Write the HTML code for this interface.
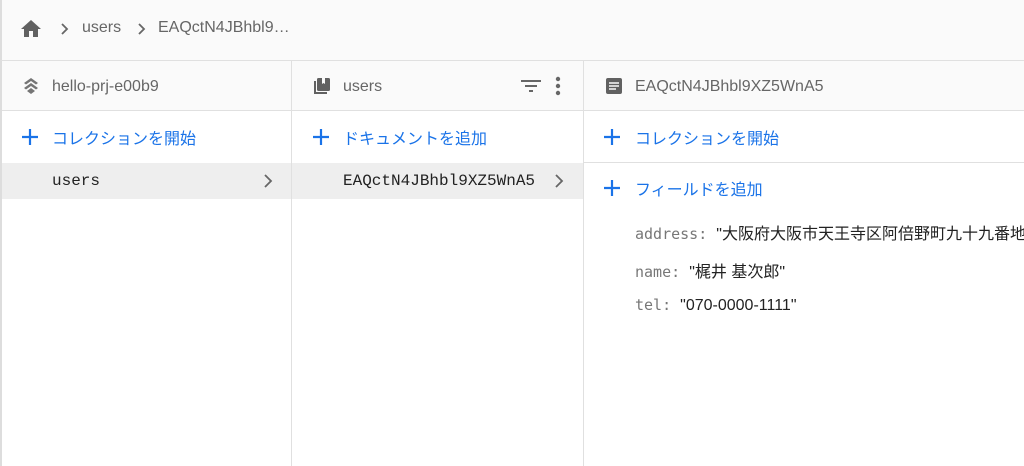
<!DOCTYPE html>
<html><head><meta charset="utf-8"><style>
*{margin:0;padding:0;box-sizing:border-box}
body{width:1024px;height:466px;overflow:hidden;background:#fff;font-family:"Liberation Sans","Noto Sans CJK JP",sans-serif;position:relative}
.abs{position:absolute}
.top{left:0;top:0;width:1024px;height:61px;background:#fafafa;border-bottom:1px solid #e0e0e0;border-left:2px solid #ddd}
.crumb{font-size:16px;color:#666;top:19px}
.hdr{top:61px;height:50px;background:#fafafa;border-bottom:1px solid #e0e0e0}
.vline{top:61px;bottom:0;width:1px;background:#e0e0e0}
.htxt{font-size:16px;color:#666;top:78px}
.blue{color:#1a73e8;font-size:16px}
.plus{width:18px;height:18px}
.mono{font-family:"Liberation Mono","DejaVu Sans Mono","Noto Sans CJK JP",monospace;font-size:16px;color:#222}
.sel{background:#eeeeee;height:36px;top:163px}
.chev{width:10px;height:14px}
.field{font-size:16px;color:#222}
.field .k{font-family:"DejaVu Sans Mono","Liberation Mono",monospace;color:#777;font-size:15px}
</style></head><body>
<div class="abs top"></div>
<svg class="abs" style="left:19px;top:17px" width="24" height="24" viewBox="0 0 24 24"><path d="M10 20v-6h4v6h5v-8h3L12 3 2 12h3v8z" fill="#616161"/></svg>
<svg class="abs" style="left:60px;top:22px" width="10" height="14" viewBox="0 0 10 14"><path d="M2 2l5 5-5 5" stroke="#666" stroke-width="1.8" fill="none"/></svg>
<div class="abs crumb" style="left:82px">users</div>
<svg class="abs" style="left:137px;top:22px" width="10" height="14" viewBox="0 0 10 14"><path d="M2 2l5 5-5 5" stroke="#666" stroke-width="1.8" fill="none"/></svg>
<div class="abs crumb" style="left:158px">EAQctN4JBhbl9…</div>

<div class="abs hdr" style="left:0;width:1024px;border-left:2px solid #ddd"></div>
<div class="abs" style="left:0;top:61px;width:2px;bottom:0;background:#ddd"></div>
<div class="abs vline" style="left:291px"></div>
<div class="abs vline" style="left:583px"></div>

<!-- col1 -->
<svg class="abs" style="left:21px;top:76px" width="20" height="20" viewBox="0 0 20 20"><path d="M3 7l7-5 7 5-2 1.5-5-3.5-5 3.5zM3 12l7-5 7 5-2 1.5-5-3.5-5 3.5zM6 15l4-3 4 3-4 3z" fill="#757575"/></svg>
<div class="abs htxt" style="left:52px">hello-prj-e00b9</div>
<svg class="abs plus" style="left:21px;top:128px" viewBox="0 0 18 18"><path d="M9 1v16M1 9h16" stroke="#1a73e8" stroke-width="2.2"/></svg>
<div class="abs blue" style="left:52px;top:125px">コレクションを開始</div>
<div class="abs sel" style="left:2px;width:289px"></div>
<div class="abs mono" style="left:52px;top:172px">users</div>
<svg class="abs chev" style="left:263px;top:174px" viewBox="0 0 10 14"><path d="M2 1l6 6-6 6" stroke="#666" stroke-width="1.8" fill="none"/></svg>

<!-- col2 -->
<svg class="abs" style="left:312px;top:76px" width="20" height="20" viewBox="0 0 20 20"><path d="M2 5v13h13v-2H4V5z" fill="#616161"/><rect x="5" y="2" width="13" height="13" rx="1.5" fill="#616161"/><path d="M13 2v6l-1.5-1-1.5 1V2z" fill="#fafafa"/></svg>
<div class="abs htxt" style="left:343px">users</div>
<svg class="abs" style="left:520px;top:76px" width="22" height="20" viewBox="0 0 22 20"><path d="M1 5h20M5 10h12M9 15h4" stroke="#666" stroke-width="2"/></svg>
<svg class="abs" style="left:554px;top:75px" width="8" height="22" viewBox="0 0 8 22"><circle cx="4" cy="4" r="2.2" fill="#666"/><circle cx="4" cy="11" r="2.2" fill="#666"/><circle cx="4" cy="18" r="2.2" fill="#666"/></svg>
<svg class="abs plus" style="left:312px;top:128px" viewBox="0 0 18 18"><path d="M9 1v16M1 9h16" stroke="#1a73e8" stroke-width="2.2"/></svg>
<div class="abs blue" style="left:343px;top:125px">ドキュメントを追加</div>
<div class="abs sel" style="left:292px;width:291px"></div>
<div class="abs mono" style="left:343px;top:172px">EAQctN4JBhbl9XZ5WnA5</div>
<svg class="abs chev" style="left:554px;top:174px" viewBox="0 0 10 14"><path d="M2 1l6 6-6 6" stroke="#666" stroke-width="1.8" fill="none"/></svg>

<!-- col3 -->
<svg class="abs" style="left:604px;top:76px" width="20" height="20" viewBox="0 0 20 20"><rect x="2" y="2" width="16" height="16" rx="2" fill="#616161"/><path d="M5 7h10M5 10h10M5 13h7" stroke="#fafafa" stroke-width="1.5"/></svg>
<div class="abs htxt" style="left:635px">EAQctN4JBhbl9XZ5WnA5</div>
<svg class="abs plus" style="left:603px;top:128px" viewBox="0 0 18 18"><path d="M9 1v16M1 9h16" stroke="#1a73e8" stroke-width="2.2"/></svg>
<div class="abs blue" style="left:635px;top:125px">コレクションを開始</div>
<div class="abs" style="left:584px;top:162px;width:440px;height:1px;background:#e0e0e0"></div>
<svg class="abs plus" style="left:603px;top:179px" viewBox="0 0 18 18"><path d="M9 1v16M1 9h16" stroke="#1a73e8" stroke-width="2.2"/></svg>
<div class="abs blue" style="left:635px;top:176px">フィールドを追加</div>
<div class="abs field" style="left:635px;top:220px;white-space:nowrap"><span class="k">address: </span>"大阪府大阪市天王寺区阿倍野町九十九番地</div>
<div class="abs field" style="left:635px;top:258px"><span class="k">name: </span>"梶井 基次郎"</div>
<div class="abs field" style="left:635px;top:296px"><span class="k">tel: </span>"070-0000-1111"</div>
</body></html>
